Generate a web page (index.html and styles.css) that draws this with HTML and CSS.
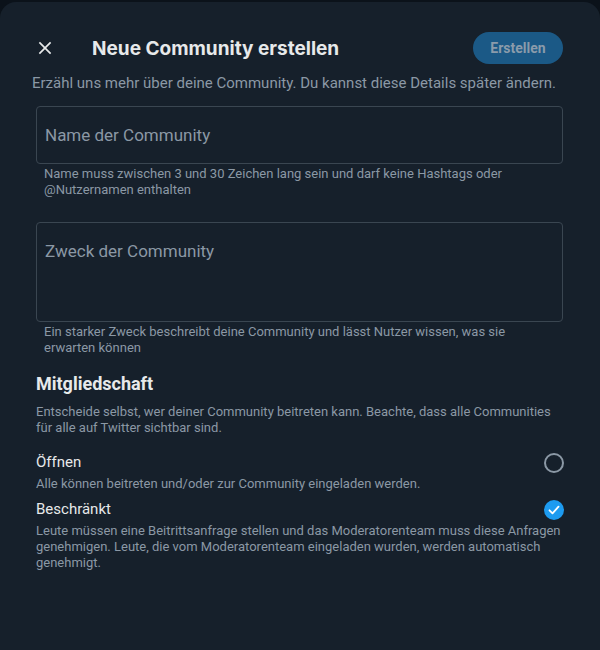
FILE: index.html
```html
<!DOCTYPE html>
<html lang="de">
<head>
<meta charset="utf-8">
<link rel="stylesheet" href="styles.css">
</head>
<body>
<div class="modal">
  <header class="header">
    <button class="close" aria-label="Schließen">
      <svg viewBox="0 0 24 24" width="20" height="20"><path d="M10.59 12L4.54 5.96l1.42-1.42L12 10.59l6.04-6.05 1.42 1.42L13.41 12l6.05 6.04-1.42 1.42L12 13.41l-6.04 6.05-1.42-1.42L10.59 12z" fill="#e7e9ea"/></svg>
    </button>
    <h1 class="title">Neue Community erstellen</h1>
    <button class="create">Erstellen</button>
  </header>
  <p class="intro">Erzähl uns mehr über deine Community. Du kannst diese Details später ändern.</p>
  <div class="field field-name"><span class="placeholder">Name der Community</span></div>
  <p class="hint">Name muss zwischen 3 und 30 Zeichen lang sein und darf keine Hashtags oder @Nutzernamen enthalten</p>
  <div class="field field-purpose"><span class="placeholder">Zweck der Community</span></div>
  <p class="hint">Ein starker Zweck beschreibt deine Community und lässt Nutzer wissen, was sie erwarten können</p>
  <h2 class="section">Mitgliedschaft</h2>
  <p class="section-desc">Entscheide selbst, wer deiner Community beitreten kann. Beachte, dass alle Communities für alle auf Twitter sichtbar sind.</p>
  <div class="option">
    <div class="option-row">
      <span class="option-label">Öffnen</span>
      <span class="radio"></span>
    </div>
    <p class="option-desc">Alle können beitreten und/oder zur Community eingeladen werden.</p>
  </div>
  <div class="option option-second">
    <div class="option-row">
      <span class="option-label">Beschränkt</span>
      <span class="radio checked">
        <svg viewBox="0 0 20 20" width="20" height="20"><path d="M5.5 10.3l3 3 6-6.6" fill="none" stroke="#fff" stroke-width="1.8" stroke-linecap="round" stroke-linejoin="round"/></svg>
      </span>
    </div>
    <p class="option-desc">Leute müssen eine Beitrittsanfrage stellen und das Moderatorenteam muss diese Anfragen genehmigen. Leute, die vom Moderatorenteam eingeladen wurden, werden automatisch genehmigt.</p>
  </div>
</div>
</body>
</html>
```

FILE: styles.css
```css
html, body {
  margin: 0;
  padding: 0;
}
body {
  background: #0b121a;
  font-family: "Roboto", "Noto Sans", "Liberation Sans", sans-serif;
  color: #e7e9ea;
  width: 600px;
  height: 650px;
  overflow: hidden;
}
.modal {
  margin-top: 2px;
  height: 648px;
  background: #16202b;
  border-radius: 16px 16px 0 0;
  padding: 0 37px 0 36px;
  box-sizing: border-box;
}
.header {
  display: flex;
  align-items: center;
  height: 62px;
}
.close {
  width: 34px;
  height: 34px;
  margin: 30px 30px 0 -8px;
  padding: 0;
  border: none;
  background: transparent;
  display: flex;
  align-items: center;
  justify-content: center;
}
.title {
  margin: 30px 0 0 0;
  font-family: "Inter", "Roboto", sans-serif;
  font-size: 19px;
  font-weight: 700;
  flex: 1;
}
.create {
  margin-top: 30px;
  width: 90px;
  height: 32px;
  border: none;
  border-radius: 16px;
  background: #1b5986;
  color: #8a9bab;
  font-family: inherit;
  font-size: 14px;
  font-weight: 700;
}
.intro {
  margin: 9px 0 0 -4px;
  font-size: 15px;
  line-height: 20px;
  color: #8b98a5;
  white-space: nowrap;
}
.field {
  border: 1px solid #3a4651;
  border-radius: 4px;
  box-sizing: border-box;
  padding: 0 8px;
}
.field-name {
  margin-top: 13px;
  height: 58px;
  padding-top: 17px;
}
.field-purpose {
  margin-top: 24px;
  height: 100px;
  padding-top: 17px;
}
.placeholder {
  font-size: 17px;
  line-height: 22px;
  color: #8b98a5;
}
.hint {
  margin: 2px 0 0 0;
  padding: 0 8px;
  font-size: 13px;
  line-height: 16px;
  color: #8b98a5;
}
.section {
  margin: 16px 0 0 0;
  font-size: 18px;
  line-height: 24px;
  font-weight: 700;
}
.section-desc {
  margin: 8px 0 0 0;
  font-size: 13px;
  line-height: 16px;
  color: #8b98a5;
}
.option {
  margin-top: 16px;
}
.option-second {
  margin-top: 7px;
}
.option-row {
  display: flex;
  align-items: center;
  justify-content: space-between;
  height: 20px;
}
.option-label {
  font-size: 15px;
  line-height: 20px;
}
.radio {
  width: 20px;
  height: 20px;
  box-sizing: border-box;
  border: 2px solid #8b98a5;
  border-radius: 50%;
  margin-right: -1px;
  margin-top: 2px;
  display: flex;
  align-items: center;
  justify-content: center;
}
.radio.checked {
  border: none;
  background: #1d9bf0;
}
.option-desc {
  margin: 4px 0 0 0;
  font-size: 13px;
  line-height: 16px;
  color: #8b98a5;
}
```
